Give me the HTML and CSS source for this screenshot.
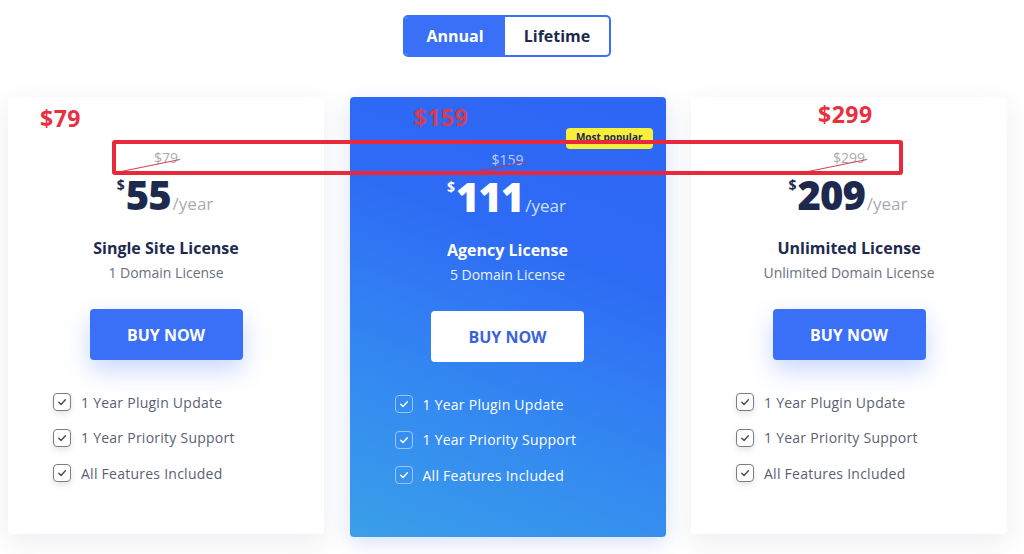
FILE: index.html
```html
<!DOCTYPE html>
<html>
<head>
<meta charset="utf-8">
<link rel="stylesheet" href="styles.css">
</head>
<body>
<div class="page">
  <div class="toggle">
    <span class="tab active">Annual</span>
    <span class="tab">Lifetime</span>
  </div>
  <div class="cards">
    <div class="card">
      <span class="note note-left">$79</span>
      <div class="old"><span class="old-text">$79</span></div>
      <div class="price"><sup>$</sup><span class="num">55</span><span class="per">/year</span></div>
      <div class="title">Single Site License</div>
      <div class="sub">1 Domain License</div>
      <a class="buy">BUY NOW</a>
      <ul class="features">
        <li><span class="check"><svg viewBox="0 0 10 10"><path d="M2.3 5.2 L4.2 7 L7.8 3.2"/></svg></span>1 Year Plugin Update</li>
        <li><span class="check"><svg viewBox="0 0 10 10"><path d="M2.3 5.2 L4.2 7 L7.8 3.2"/></svg></span>1 Year Priority Support</li>
        <li><span class="check"><svg viewBox="0 0 10 10"><path d="M2.3 5.2 L4.2 7 L7.8 3.2"/></svg></span>All Features Included</li>
      </ul>
    </div>
    <div class="card featured">
      <span class="note note-mid">$159</span>
      <span class="badge">Most popular</span>
      <div class="old"><span class="old-text">$159</span></div>
      <div class="price"><sup>$</sup><span class="num">111</span><span class="per">/year</span></div>
      <div class="title">Agency License</div>
      <div class="sub">5 Domain License</div>
      <a class="buy">BUY NOW</a>
      <ul class="features">
        <li><span class="check"><svg viewBox="0 0 10 10"><path d="M2.3 5.2 L4.2 7 L7.8 3.2"/></svg></span>1 Year Plugin Update</li>
        <li><span class="check"><svg viewBox="0 0 10 10"><path d="M2.3 5.2 L4.2 7 L7.8 3.2"/></svg></span>1 Year Priority Support</li>
        <li><span class="check"><svg viewBox="0 0 10 10"><path d="M2.3 5.2 L4.2 7 L7.8 3.2"/></svg></span>All Features Included</li>
      </ul>
    </div>
    <div class="card">
      <span class="note note-right">$299</span>
      <div class="old"><span class="old-text">$299</span></div>
      <div class="price"><sup>$</sup><span class="num">209</span><span class="per">/year</span></div>
      <div class="title">Unlimited License</div>
      <div class="sub">Unlimited Domain License</div>
      <a class="buy">BUY NOW</a>
      <ul class="features">
        <li><span class="check"><svg viewBox="0 0 10 10"><path d="M2.3 5.2 L4.2 7 L7.8 3.2"/></svg></span>1 Year Plugin Update</li>
        <li><span class="check"><svg viewBox="0 0 10 10"><path d="M2.3 5.2 L4.2 7 L7.8 3.2"/></svg></span>1 Year Priority Support</li>
        <li><span class="check"><svg viewBox="0 0 10 10"><path d="M2.3 5.2 L4.2 7 L7.8 3.2"/></svg></span>All Features Included</li>
      </ul>
    </div>
  </div>
  <div class="highlight"></div>
</div>
</body>
</html>
```
FILE: styles.css
```css
* { box-sizing: border-box; }
html, body { margin: 0; padding: 0; background: #ffffff; }
body {
  font-family: "Open Sans", "Noto Sans", sans-serif;
  color: #1d2a4d;
  width: 1024px;
  height: 554px;
  overflow: hidden;
}
.page {
  position: relative;
  padding-top: 15px;
}
.toggle {
  display: flex;
  width: 208px;
  height: 42px;
  margin: 0 auto 0 403px;
  border: 2px solid #3a6ff7;
  border-radius: 5px;
  overflow: hidden;
  background: #fff;
}
.tab {
  flex: 1;
  display: flex;
  align-items: center;
  justify-content: center;
  font-weight: 700;
  font-size: 16px;
  color: #1d2a4d;
}
.tab.active {
  flex: 0 0 100px;
  background: #3a6ff7;
  color: #fff;
}
.cards {
  display: flex;
  gap: 25.5px;
  padding-left: 8px;
  margin-top: 40px;
}
.card {
  position: relative;
  width: 316px;
  height: 437px;
  background: #fff;
  border-radius: 4px;
  box-shadow: 0 8px 28px rgba(40, 50, 100, 0.09);
  display: flex;
  flex-direction: column;
  align-items: center;
  padding-top: 52px;
}
.card.featured {
  height: 440px;
  padding-top: 54px;
  background: linear-gradient(22deg, #3a9fe9 0%, #3386f2 35%, #2e6bf5 65%, #2d65f4 100%);
  color: #fff;
  box-shadow: 0 6px 20px rgba(40, 90, 220, 0.18);
}
.note {
  position: absolute;
  top: 6px;
  font-weight: 700;
  font-size: 23px;
  letter-spacing: 0.5px;
  line-height: 30px;
  color: #e8303f;
}
.note-left { left: 32px; }
.note-mid { left: 64px; color: #d63b52; top: 5px; }
.note-right { left: 127px; top: 2px; }
.badge {
  position: absolute;
  top: 31px;
  right: 13px;
  background: #f8ee3c;
  color: #1d2a4d;
  font-size: 10px;
  font-weight: 700;
  padding: 3px 10px 5px;
  border-radius: 4px;
  line-height: 13px;
}
.old {
  height: 18px;
  font-size: 14px;
  line-height: 18px;
  color: #a9abb4;
}
.featured .old { color: #b9cdfb; }
.old-text { position: relative; display: inline-block; }
.old-text::before {
  content: "";
  position: absolute;
  right: -2px;
  top: 10px;
  width: 60px;
  height: 1px;
  background: #d9404d;
  transform: rotate(-11.5deg);
  transform-origin: right center;
}
.featured .old-text::before { background: #b23a6a; }
.price {
  display: flex;
  align-items: baseline;
  margin-top: 6px;
  height: 44px;
  margin-left: -2px;
}
.price sup {
  font-size: 14px;
  font-weight: 700;
  align-self: flex-start;
  margin-top: 2px;
  margin-right: 1px;
}
.num {
  font-size: 40px;
  font-weight: 800;
  letter-spacing: -1px;
  line-height: 44px;
}
.per {
  font-size: 17px;
  color: #a9abb4;
  margin-left: 2px;
}
.featured .per { color: #cfe0ff; }
.title {
  margin-top: 21px;
  font-size: 16px;
  font-weight: 700;
  line-height: 20px;
}
.sub {
  margin-top: 6px;
  font-size: 14px;
  color: #6b6f80;
  line-height: 18px;
}
.featured .sub { color: #eaf1ff; }
.buy {
  margin-top: 27px;
  width: 153px;
  height: 51px;
  border-radius: 4px;
  background: #3a6ff7;
  color: #fff;
  display: flex;
  align-items: center;
  justify-content: center;
  font-size: 16px;
  font-weight: 700;
  letter-spacing: 0;
  box-shadow: 0 10px 24px rgba(58, 111, 247, 0.28);
}
.featured .buy {
  background: #fff;
  color: #3a63db;
  box-shadow: none;
}
.features {
  list-style: none;
  margin: 33px 0 0;
  padding: 0 0 0 45px;
  align-self: stretch;
}
.features li {
  display: flex;
  align-items: center;
  height: 18px;
  margin-bottom: 17.5px;
  font-size: 14px;
  letter-spacing: 0.25px;
  color: #5a5f73;
}
.featured .features li { color: #fff; }
.check {
  width: 18px;
  height: 18px;
  border: 1.5px solid #7a7d88;
  border-radius: 4px;
  margin-right: 10px;
  display: flex;
  align-items: center;
  justify-content: center;
  box-shadow: 0 3px 6px rgba(0, 0, 0, 0.1);
  background: #fff;
}
.check svg { width: 12px; height: 12px; }
.check path { fill: none; stroke: #4a4d5a; stroke-width: 1.2; stroke-linecap: round; stroke-linejoin: round; }
.featured .check {
  border-color: #9cc4ff;
  background: transparent;
  box-shadow: none;
}
.featured .check path { stroke: #ffffff; }
.highlight {
  position: absolute;
  left: 112px;
  top: 140px;
  width: 791px;
  height: 35px;
  border: 4px solid #e8283b;
  border-radius: 3px;
  pointer-events: none;
}
```
